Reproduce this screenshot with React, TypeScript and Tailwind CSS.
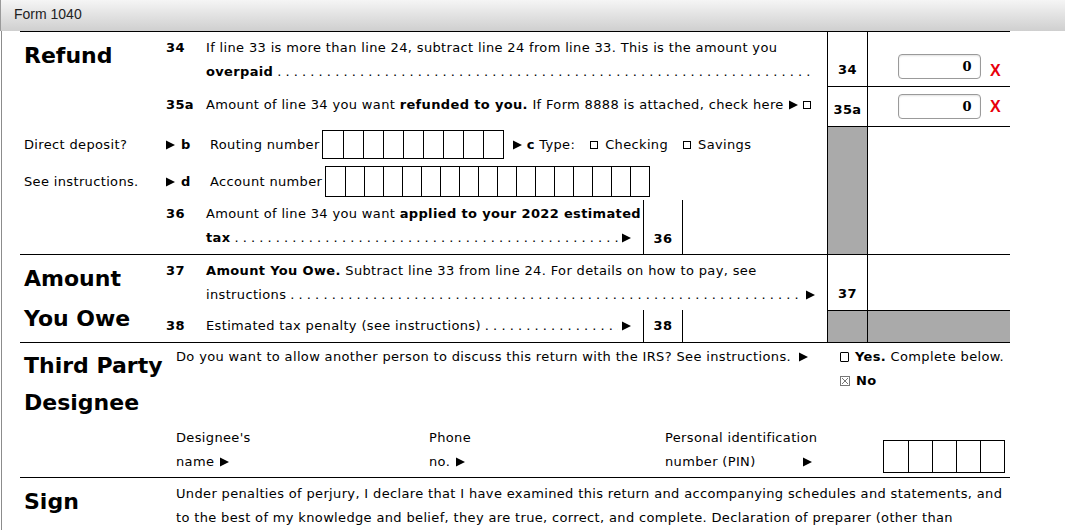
import React from 'react'

const Tri = () => (
  <svg width="9" height="10" viewBox="0 0 9 10" className="inline-block shrink-0 align-[-1px]">
    <path d="M0 0.5L9 5L0 9.5Z" fill="#000" />
  </svg>
)

const Box = () => <span className="inline-block h-[8px] w-[8px] shrink-0 border border-black" />

const Dots = () => (
  <span className="ml-[4px] flex-1 overflow-hidden whitespace-nowrap tracking-normal">{'. '.repeat(120)}</span>
)

const Cells = ({ n, w, h }: { n: number; w: string; h: string }) => (
  <div className={`flex border border-black ${h}`}>
    {Array.from({ length: n }).map((_, i) => (
      <div key={i} className={`${w} border-black ${i > 0 ? 'border-l' : ''}`} />
    ))}
  </div>
)

const Amount = () => (
  <>
    <div className="flex h-[25px] w-[83px] items-center justify-end rounded-[4px] border border-[#9a9a9a] pr-[8px] font-['DejaVu_Serif',serif] font-bold shadow-[inset_0_1px_2px_rgba(0,0,0,0.12)]">
      0
    </div>
    <span className="ml-[9px] w-[10px] font-['Liberation_Sans',Arial,sans-serif] text-[16px] leading-none font-bold text-[#e8000b]">
      X
    </span>
  </>
)

export default function App() {
  return (
    <div className="h-[530px] w-[1065px] overflow-hidden bg-white font-['DejaVu_Sans',Verdana,sans-serif] text-[13px] leading-6 tracking-[0.35px] text-black">
      {/* window title */}
      <div className="h-[31px] border-l border-[#9a9a9a] bg-linear-to-b from-[#f5f5f5] to-[#cfcfcf] pl-[13px] font-['Liberation_Sans',Arial,sans-serif] text-[14px] leading-[28px] tracking-normal text-[#222]">
        Form 1040
      </div>

      <div className="ml-[1px] h-[499px] border-l border-[#8c8c8c] pl-[18px]">
        <div className="w-[990px]">
          {/* Refund */}
          <section className="grid grid-cols-[146px_40px_621px_40px_143px] grid-rows-[54px_40px_37px_37px_54px] border-t border-black">
            <div className="col-start-1 row-span-2 row-start-1 pt-1 pl-1 text-[22px] leading-[40px] font-bold tracking-normal">Refund</div>

            <div className="col-start-2 row-start-1 pt-1 font-bold">34</div>
            <div className="col-start-3 row-start-1 pt-1 pr-[14px]">
              <div className="whitespace-nowrap">If line 33 is more than line 24, subtract line 24 from line 33. This is the amount you</div>
              <div className="flex">
                <b>overpaid</b>
                <Dots />
              </div>
            </div>
            <div className="col-start-4 row-start-1 flex items-end justify-center border-l border-black pb-1 font-bold">34</div>
            <div className="col-start-5 row-start-1 flex items-end justify-end border-l border-black pr-[10px] pb-[7px]">
              <Amount />
            </div>

            <div className="col-start-2 row-start-2 pt-[7px] font-bold">35a</div>
            <div className="col-start-3 row-start-2 flex items-center gap-[5px] self-start pt-[7px]">
              <span className="whitespace-nowrap">
                Amount of line 34 you want <b>refunded to you.</b> If Form 8888 is attached, check here
              </span>
              <Tri />
              <Box />
            </div>
            <div className="col-start-4 row-start-2 flex items-end justify-center border-t border-l border-black pb-1 font-bold">35a</div>
            <div className="col-start-5 row-start-2 flex items-center justify-end border-t border-l border-black pr-[10px]">
              <Amount />
            </div>

            <div className="col-start-1 row-start-3 flex items-center pl-1">Direct deposit?</div>
            <div className="col-start-2 row-start-3 flex items-center gap-[6px] font-bold">
              <Tri />b
            </div>
            <div className="col-start-3 row-start-3 flex items-center pl-1">
              <span>Routing number</span>
              <div className="ml-[2px]">
                <Cells n={9} w="w-[20px]" h="h-[29px]" />
              </div>
              <span className="ml-[9px] flex items-center gap-[5px]">
                <Tri />
                <span>
                  <b>c</b> Type:
                </span>
              </span>
              <span className="ml-[15px] flex items-center gap-[7px]">
                <Box />
                Checking
              </span>
              <span className="ml-[15px] flex items-center gap-[7px]">
                <Box />
                Savings
              </span>
            </div>

            <div className="col-start-1 row-start-4 flex items-center pl-1">See instructions.</div>
            <div className="col-start-2 row-start-4 flex items-center gap-[6px] font-bold">
              <Tri />d
            </div>
            <div className="col-start-3 row-start-4 flex items-center pl-1">
              <span>Account number</span>
              <div className="ml-[3px]">
                <Cells n={17} w="w-[19px]" h="h-[31px]" />
              </div>
            </div>

            <div className="col-start-2 row-start-5 pt-[2px] font-bold">36</div>
            <div className="col-start-3 row-start-5 flex">
              <div className="w-[437px] pt-[2px] pr-[12px]">
                <div className="whitespace-nowrap">
                  Amount of line 34 you want <b>applied to your 2022 estimated</b>
                </div>
                <div className="flex items-center">
                  <b>tax</b>
                  <Dots />
                  <span className="ml-[4px] flex">
                    <Tri />
                  </span>
                </div>
              </div>
              <div className="flex w-[40px] items-end justify-center border-x border-black pb-[3px] font-bold">36</div>
            </div>
            <div className="col-start-4 row-span-3 row-start-3 border-t border-l border-black bg-[#aaaaaa]" />
            <div className="col-start-5 row-span-3 row-start-3 border-t border-l border-black" />
          </section>

          {/* Amount You Owe */}
          <section className="grid grid-cols-[146px_40px_621px_40px_143px] grid-rows-[55px_32px] border-t border-black">
            <div className="col-start-1 row-span-2 row-start-1 pt-1 pl-1 text-[22px] leading-[40px] font-bold tracking-normal">
              Amount
              <br />
              You Owe
            </div>
            <div className="col-start-2 row-start-1 pt-1 font-bold">37</div>
            <div className="col-start-3 row-start-1 pt-1 pr-[12px]">
              <div className="whitespace-nowrap">
                <b>Amount You Owe.</b> Subtract line 33 from line 24. For details on how to pay, see
              </div>
              <div className="flex items-center">
                <span>instructions</span>
                <Dots />
                <span className="ml-[4px] flex">
                  <Tri />
                </span>
              </div>
            </div>
            <div className="col-start-4 row-start-1 flex items-end justify-center border-l border-black pb-1 font-bold">37</div>
            <div className="col-start-5 row-start-1 border-l border-black" />

            <div className="col-start-2 row-start-2 flex items-center font-bold">38</div>
            <div className="col-start-3 row-start-2 flex">
              <div className="flex w-[437px] items-center pr-[12px]">
                <span className="whitespace-nowrap">Estimated tax penalty (see instructions)</span>
                <Dots />
                <span className="ml-[4px] flex">
                  <Tri />
                </span>
              </div>
              <div className="flex w-[40px] items-center justify-center border-x border-black font-bold">38</div>
            </div>
            <div className="col-start-4 row-start-2 border-t border-l border-black bg-[#aaaaaa]" />
            <div className="col-start-5 row-start-2 border-t border-l border-black bg-[#aaaaaa]" />
          </section>

          {/* Third Party Designee */}
          <section className="flex border-t border-black">
            <div className="w-[156px] pt-1 pl-1 text-[22px] leading-[37px] font-bold tracking-normal">
              Third Party
              <br />
              Designee
            </div>
            <div className="flex flex-col pt-[2px] pb-[3px]">
              <div className="flex">
                <div className="flex w-[664px] items-start gap-[8px]">
                  <span className="whitespace-nowrap">
                    Do you want to allow another person to discuss this return with the IRS? See instructions.
                  </span>
                  <span className="mt-[7px] flex">
                    <Tri />
                  </span>
                </div>
                <div>
                  <div className="flex items-center gap-[6px]">
                    <span className="inline-block h-[10px] w-[9px] rounded-[1px] border border-black" />
                    <span className="whitespace-nowrap">
                      <b>Yes.</b> Complete below.
                    </span>
                  </div>
                  <div className="flex items-center gap-[6px]">
                    <svg width="10" height="10" viewBox="0 0 10 10" className="shrink-0">
                      <rect x="0.5" y="0.5" width="9" height="9" fill="none" stroke="#777" />
                      <path d="M2 2L8 8M8 2L2 8" stroke="#777" strokeWidth="1" />
                    </svg>
                    <b>No</b>
                  </div>
                </div>
              </div>
              <div className="mt-[33px] flex items-end">
                <div className="w-[253px]">
                  <div>Designee's</div>
                  <div className="flex items-center gap-[6px]">
                    name <Tri />
                  </div>
                </div>
                <div className="w-[236px]">
                  <div>Phone</div>
                  <div className="flex items-center gap-[6px]">
                    no. <Tri />
                  </div>
                </div>
                <div className="w-[218px]">
                  <div className="whitespace-nowrap">Personal identification</div>
                  <div className="flex items-center">
                    <span className="w-[138px] whitespace-nowrap">number (PIN)</span>
                    <Tri />
                  </div>
                </div>
                <div className="mb-[1px]">
                  <Cells n={5} w="w-[24px]" h="h-[33px]" />
                </div>
              </div>
            </div>
          </section>

          {/* Sign */}
          <section className="flex border-t border-black">
            <div className="w-[156px] pt-1 pl-1 text-[22px] leading-[40px] font-bold tracking-normal">Sign</div>
            <div className="w-[834px] pt-1">
              Under penalties of perjury, I declare that I have examined this return and accompanying schedules and
              statements, and
              <br />
              to the best of my knowledge and belief, they are true, correct, and complete. Declaration of preparer (other
              than taxpayer) is based on all information of which preparer has any knowledge.
            </div>
          </section>
        </div>
      </div>
    </div>
  )
}
